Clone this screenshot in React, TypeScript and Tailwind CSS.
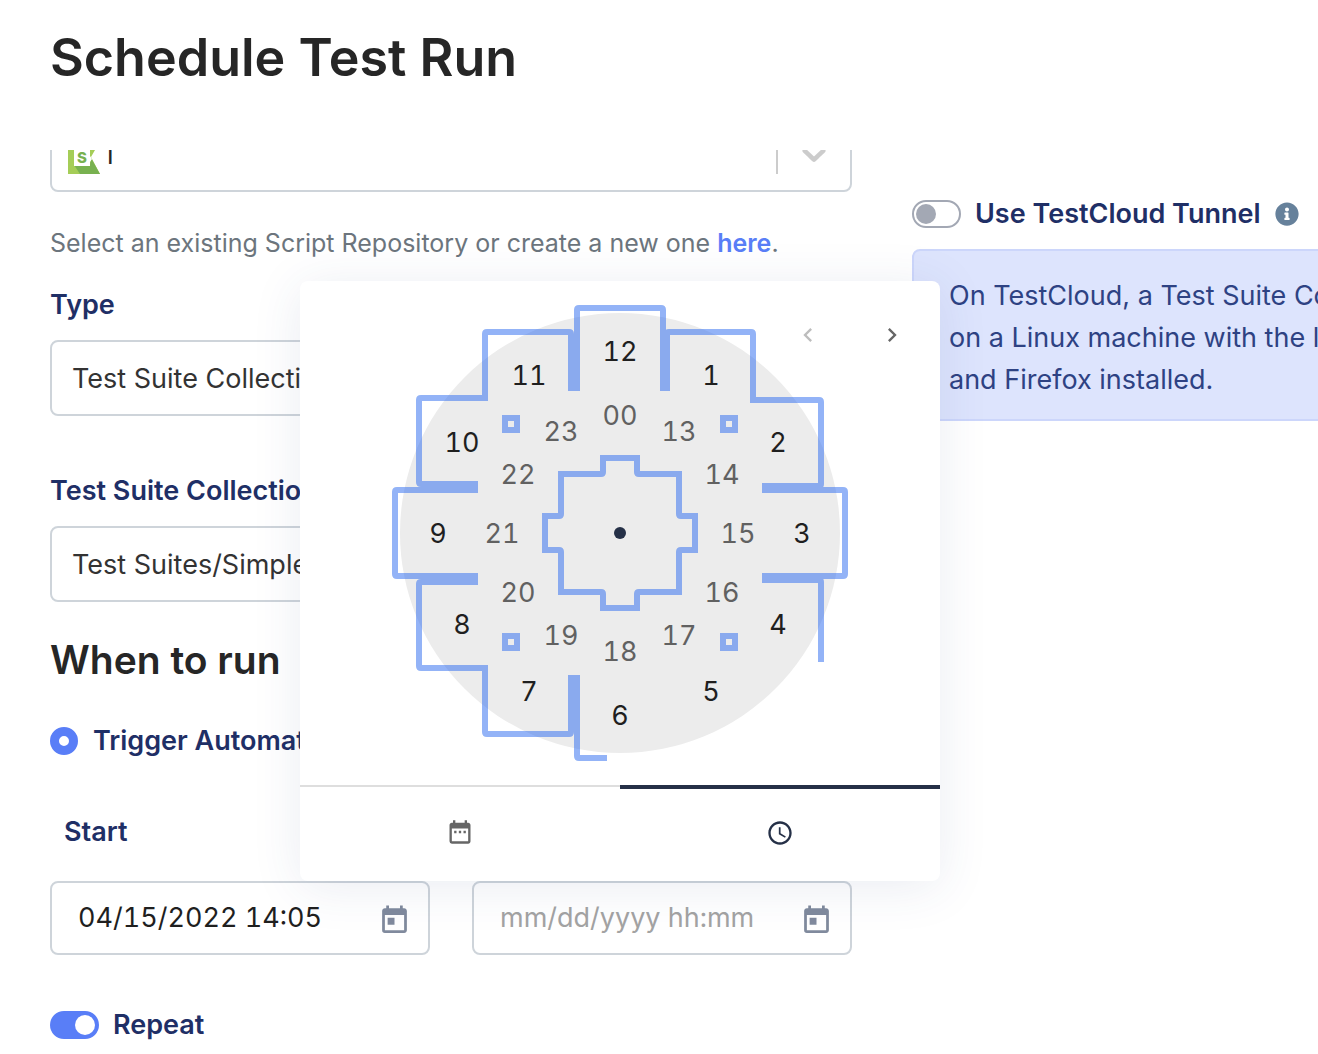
import React, { useState } from "react";
import { FaInfoCircle } from "react-icons/fa";
import {
  MdAccessTime,
  MdDateRange,
  MdKeyboardArrowLeft,
  MdKeyboardArrowRight,
  MdToday,
} from "react-icons/md";

const OUTER_HOURS = ["12", "1", "2", "3", "4", "5", "6", "7", "8", "9", "10", "11"];
const INNER_HOURS = ["00", "13", "14", "15", "16", "17", "18", "19", "20", "21", "22", "23"];

// Ring around the focused dial, drawn in the dial's 640x504 panel
const FOCUS_RING = [
  // 12 and 1
  "M277 110V29Q277 27 279 27H361Q363 27 363 29V110",
  "M367 110V53Q367 51 369 51H451Q453 51 453 53V119H519Q521 119 521 121V203Q521 205 519 205H462",
  // 3 and 4
  "M462 209H543Q545 209 545 211V293Q545 295 543 295H462",
  "M462 299H519Q521 299 521 301V381",
  // 11 and 10
  "M271 110V53Q271 51 269 51H187Q185 51 185 53V117H121Q119 117 119 119V201Q119 203 121 203H178",
  // 9
  "M178 209H97Q95 209 95 211V293Q95 295 97 295H178",
  // 8 and 7
  "M178 301H121Q119 301 119 303V385Q119 387 121 387H185V451Q185 453 187 453H269Q271 453 271 451V394",
  // 6
  "M277 394V475Q277 477 279 477H307",
  // gaps between both number rings
  "M205 137H217V149H205Z",
  "M423 137H435V149H423Z",
  "M205 355H217V367H205Z",
  "M423 355H435V367H423Z",
  // middle
  "M303 177H337V191Q337 193 339 193H379V233Q379 235 381 235H395V269H381Q379 269 379 271V311H339Q337 311 337 313V327H303V313Q303 311 301 311H261V271Q261 269 259 269H245V235H259Q261 235 261 233V193H301Q303 193 303 191Z",
].join("");

function HourButton({ hour, index, inner }: { hour: string; index: number; inner?: boolean }) {
  const angle = (index * Math.PI) / 6;
  const radius = inner ? 118 : 182;

  return (
    <button
      type="button"
      className={
        inner
          ? "absolute flex size-16 -translate-x-1/2 -translate-y-1/2 items-center justify-center pt-0.5 text-[27px] text-[#616161] tabular-nums"
          : "absolute flex size-16 -translate-x-1/2 -translate-y-1/2 items-center justify-center pt-0.5 text-[27px] text-[#1f1f1f] tabular-nums"
      }
      style={{
        left: Math.round(220 + radius * Math.sin(angle)),
        top: Math.round(220 - radius * Math.cos(angle)),
      }}
    >
      {hour}
    </button>
  );
}

function TimePicker() {
  return (
    <div
      role="dialog"
      aria-label="Choose time"
      className="absolute bottom-full left-[250px] z-10 flex h-[600px] w-[640px] flex-col rounded-lg bg-white shadow-[0_6px_50px_rgba(50,70,130,0.1)]"
    >
      <div className="relative flex flex-1 justify-center pt-8">
        <div className="relative size-[440px] rounded-full bg-[#ececec]">
          {INNER_HOURS.map((hour, i) => (
            <HourButton key={hour} hour={hour} index={i} inner />
          ))}
          {OUTER_HOURS.map((hour, i) => (
            <HourButton key={hour} hour={hour} index={i} />
          ))}
        </div>
        <svg
          viewBox="0 0 640 504"
          className="pointer-events-none absolute top-0 left-0 h-[504px] w-[640px]"
          aria-hidden="true"
        >
          <path d={FOCUS_RING} fill="none" stroke="#2768f0" strokeWidth="6" opacity="0.5" />
          <circle cx="320" cy="252" r="6" fill="#253047" />
        </svg>
        <div className="absolute top-[30px] right-6 flex gap-9">
          <button
            type="button"
            disabled
            aria-label="Previous"
            className="flex size-12 items-center justify-center text-[28px] text-[#bdbdbd]"
          >
            <MdKeyboardArrowLeft />
          </button>
          <button
            type="button"
            aria-label="Next"
            className="flex size-12 items-center justify-center text-[28px] text-[#666]"
          >
            <MdKeyboardArrowRight />
          </button>
        </div>
      </div>
      <div className="grid h-24 grid-cols-2 text-[28px]">
        <button
          type="button"
          aria-label="Date"
          className="flex items-center justify-center border-t-2 border-[#dedede] pb-1 text-[#666]"
        >
          <MdDateRange />
        </button>
        <button
          type="button"
          aria-label="Time"
          className="flex items-center justify-center border-t-4 border-[#253047] pb-1 text-[#253047]"
        >
          <MdAccessTime />
        </button>
      </div>
    </div>
  );
}

function Toggle({ id, defaultChecked }: { id: string; defaultChecked?: boolean }) {
  return (
    <input
      id={id}
      type="checkbox"
      role="switch"
      defaultChecked={defaultChecked}
      className="flex h-7 w-[49px] shrink-0 appearance-none items-center rounded-full border-2 border-[#a3a8b4] bg-white px-0.5 before:size-5 before:rounded-full before:bg-[#a3a8b4] checked:justify-end checked:border-[#597ef7] checked:bg-[#597ef7] checked:before:bg-white"
    />
  );
}

function SelectField({ id, label, value }: { id: string; label: string; value: string }) {
  return (
    <div className="flex flex-col gap-[17px]">
      <label htmlFor={id} className="text-[27px] leading-9 font-semibold text-[#1f2f66]">
        {label}
      </label>
      <select
        id={id}
        className="h-[76px] w-full appearance-none rounded-lg border-2 border-[#ced4da] bg-white px-5 pt-0.5 text-[27px] text-[#333]"
      >
        <option>{value}</option>
      </select>
    </div>
  );
}

function DateField({ id, value }: { id: string; value?: string }) {
  return (
    <div className="flex h-[74px] items-center rounded-lg border-2 border-[#ced4da] bg-white pr-[17px] pl-[26px]">
      <input
        id={id}
        type="text"
        defaultValue={value}
        placeholder="mm/dd/yyyy hh:mm"
        className="min-w-0 flex-1 text-[27px] text-[#1f1f1f] tabular-nums outline-none placeholder:text-[#a3a3a3]"
      />
      <button type="button" aria-label="Open calendar" className="pt-1 text-[33px] text-[#808a9d]">
        <MdToday />
      </button>
    </div>
  );
}

function RepositoryLogo() {
  return (
    <svg viewBox="0 0 32 32" className="size-8" aria-hidden="true">
      <path d="M0 0H27V8L23 15L32 32H0Z" fill="#a5cd57" />
      <path d="M6 23H22L23 16L32 32H12Z" fill="#78b150" />
      <path d="M6 6H22V14L24 17L22 20V24H6Z" fill="#fff" />
      <text x="9" y="21" fontSize="15" fontWeight="800" fill="#78b150">
        S
      </text>
    </svg>
  );
}

export default function App() {
  const [trigger, setTrigger] = useState("auto");

  return (
    <div className="min-h-screen overflow-hidden bg-white pl-[50px] font-['Inter',sans-serif] text-[#262626]">
      <h1 className="pt-6 pb-[58px] text-[52px] leading-[68px] font-semibold">Schedule Test Run</h1>

      <div className="grid grid-cols-[minmax(0,802px)_minmax(0,1fr)] gap-[60px] overflow-hidden">
        <form className="pb-2.5">
          {/* Script repository, scrolled half out of view */}
          <div className="-mt-[34px] flex h-[76px] items-center rounded-lg border-2 border-[#ced4da] bg-white pl-4">
            <div className="pt-2">
              <RepositoryLogo />
            </div>
            <select
              aria-label="Script Repository"
              className="h-full min-w-0 flex-1 appearance-none px-[7px] pt-0.5 text-[27px] text-[#262626]"
            >
              <option>l</option>
            </select>
            <span className="h-10 w-0.5 bg-[#ccc]" />
            <svg viewBox="0 0 20 20" className="mx-4 size-10" fill="#ccc" aria-hidden="true">
              <path d="M4.516 7.548c0.436-0.446 1.043-0.481 1.576 0l3.908 3.747 3.908-3.747c0.533-0.481 1.141-0.446 1.574 0 0.436 0.445 0.408 1.197 0 1.615-0.406 0.418-4.695 4.502-4.695 4.502-0.217 0.223-0.502 0.335-0.787 0.335s-0.57-0.112-0.789-0.335c0 0-4.287-4.084-4.695-4.502s-0.436-1.17 0-1.615z" />
            </svg>
          </div>
          <p className="mt-[31px] text-[25px] leading-10 text-[#6c757d]">
            Select an existing Script Repository or create a new one{" "}
            <a href="#" className="font-semibold text-[#597ef7]">
              here
            </a>
            .
          </p>

          <div className="mt-6 flex flex-col gap-[57px]">
            <SelectField id="type" label="Type" value="Test Suite Collection" />
            <SelectField id="collection" label="Test Suite Collection" value="Test Suites/Simple" />
          </div>

          <h2 className="mt-[34px] text-[39px] leading-[48px] font-semibold">When to run</h2>

          <div className="mt-[39px] flex items-center gap-[15px]">
            <input
              id="auto"
              type="radio"
              name="trigger"
              checked={trigger === "auto"}
              onChange={() => setTrigger("auto")}
              className="size-7 appearance-none rounded-full border-2 border-[#a3a8b4] bg-white checked:border-[9px] checked:border-[#597ef7]"
            />
            <label htmlFor="auto" className="text-[27px] leading-9 font-semibold text-[#1f2f66]">
              Trigger Automatically
            </label>
          </div>

          <div className="mt-[55px] grid grid-cols-2 gap-x-[42px]">
            <label htmlFor="start" className="pb-[31px] pl-3.5 text-[27px] leading-9 font-semibold text-[#1f2f66]">
              Start
            </label>
            <label htmlFor="end" className="pb-[31px] pl-3.5 text-[27px] leading-9 font-semibold text-[#1f2f66]">
              End
            </label>
            <div className="relative col-span-2 grid grid-cols-2 gap-x-[42px]">
              <DateField id="start" value="04/15/2022 14:05" />
              <DateField id="end" />
              <TimePicker />
            </div>
          </div>

          <div className="mt-[52px] flex items-center gap-3.5">
            <Toggle id="repeat" defaultChecked />
            <label htmlFor="repeat" className="text-[27px] leading-9 font-semibold text-[#1f2f66]">
              Repeat
            </label>
          </div>
        </form>

        <aside className="pt-[46px]">
          <div className="flex items-center gap-3.5">
            <Toggle id="tunnel" />
            <label htmlFor="tunnel" className="text-[27px] leading-9 font-semibold whitespace-nowrap text-[#1f2f66]">
              Use TestCloud Tunnel
            </label>
            <FaInfoCircle className="size-6 shrink-0 text-[#66819b]" />
          </div>
          <div className="mt-[17px] w-max rounded-lg border-2 border-[#ccd6fb] bg-[#dde4fd] px-[35px] pt-6 pb-[18px] text-[27px] leading-[42px] text-[#2e4283]">
            <p>On TestCloud, a Test Suite Collection</p>
            <p>on a Linux machine with the latest</p>
            <p>and Firefox installed.</p>
          </div>
        </aside>
      </div>
    </div>
  );
}
